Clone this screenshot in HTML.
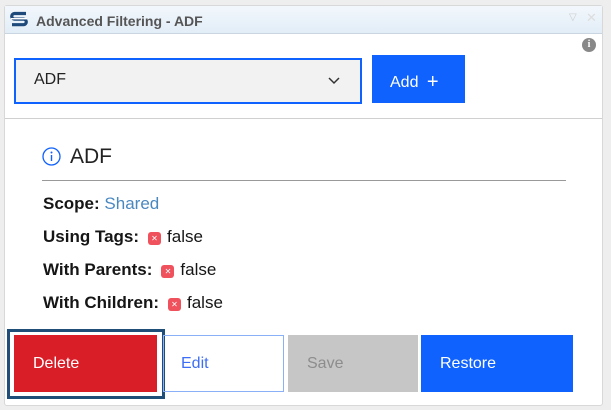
<!DOCTYPE html>
<html><head><style>
body{margin:0;width:611px;height:410px;background:#eeeeee;font-family:"Liberation Sans",sans-serif;position:relative;overflow:hidden}
.a{position:absolute;box-sizing:border-box}
.x{display:inline-block;width:13px;height:13px;background:#f0525d;border-radius:3px;color:#fff;font-size:8px;text-align:center;line-height:13px;vertical-align:1px;margin:0 6px 0 9px}
</style></head><body>
<div class="a" style="left:4px;top:5px;width:599px;height:401px;background:#fff;border:1px solid #d8d8d8;border-radius:3px"></div>
<div class="a" style="left:5px;top:6px;width:597px;height:28px;background:linear-gradient(#f2f7fc,#e2edf7);border-bottom:1px solid #c9d6e2"></div>
<svg class="a" style="left:9px;top:10px" width="20" height="19" viewBox="0 0 20 19"><path d="M17 3.5H5.5a2.8 2.8 0 0 0 0 5.6h9a2.8 2.8 0 0 1 0 5.6H3" fill="none" stroke="#1d4a7a" stroke-width="3.2"/><rect x="2" y="8" width="16" height="1.4" fill="#fff"/></svg>
<div class="a" style="left:36px;top:13px;font-size:14px;font-weight:bold;color:#555">Advanced Filtering - ADF</div>
<div class="a" style="left:569px;top:12px;color:#ccc;font-size:10px">▽</div>
<div class="a" style="left:586px;top:10px;color:#ddd;font-size:13px">✕</div>
<div class="a" style="left:582px;top:38px;width:14px;height:14px;border-radius:50%;background:#888;color:#fff;font-size:10px;font-weight:bold;text-align:center;line-height:14px;font-family:'Liberation Serif',serif">i</div>
<div class="a" style="left:14px;top:58px;width:348px;height:46px;background:#f2f2f2;border:2px solid #0f62fe"></div>
<div class="a" style="left:34px;top:71px;font-size:16px;color:#222">ADF</div>
<svg class="a" style="left:327px;top:76px" width="14" height="9"><path d="M2 2l5 5 5-5" fill="none" stroke="#333" stroke-width="1.5"/></svg>
<div class="a" style="left:372px;top:55px;width:93px;height:48px;background:#0f62fe;color:#fff;font-size:16px;padding:15px 0 0 18px">Add <span style="font-size:20px;position:relative;top:1px;margin-left:4px">+</span></div>
<div class="a" style="left:5px;top:118px;width:597px;height:1px;background:#d0d0d0"></div>
<svg class="a" style="left:42px;top:147px" width="19" height="19"><circle cx="9.5" cy="9.5" r="8.5" fill="none" stroke="#0f62fe" stroke-width="1.3"/><rect x="8.8" y="8" width="1.4" height="6" fill="#0f62fe"/><circle cx="9.5" cy="5.5" r="1" fill="#0f62fe"/></svg>
<div class="a" style="left:70px;top:145px;font-size:21px;color:#222">ADF</div>
<div class="a" style="left:42px;top:180px;width:524px;height:1px;background:#999"></div>
<div class="a" style="left:43px;top:194px;font-size:17px;color:#161616;line-height:20px">
<div style="height:33px"><b>Scope:</b> <span style="color:#4a88c0">Shared</span></div>
<div style="height:33px"><b>Using Tags:</b><span class="x">✕</span>false</div>
<div style="height:33px"><b>With Parents:</b><span class="x">✕</span>false</div>
<div style="height:33px"><b>With Children:</b><span class="x">✕</span>false</div>
</div>
<div class="a" style="left:7px;top:329px;width:158px;height:70px;border:3px solid #1f4e79"></div>
<div class="a" style="left:14px;top:335px;width:143px;height:57px;background:#da1e28;color:#fff;font-size:16px;padding:20px 0 0 19px">Delete</div>
<div class="a" style="left:163px;top:335px;width:121px;height:57px;border:1px solid #8ab0f8;color:#3d6ef5;font-size:16px;padding:19px 0 0 17px">Edit</div>
<div class="a" style="left:288px;top:335px;width:130px;height:57px;background:#c6c6c6;color:#8d8d8d;font-size:16px;padding:20px 0 0 19px">Save</div>
<div class="a" style="left:421px;top:335px;width:152px;height:57px;background:#0f62fe;color:#fff;font-size:16px;padding:20px 0 0 19px">Restore</div>
</body></html>
